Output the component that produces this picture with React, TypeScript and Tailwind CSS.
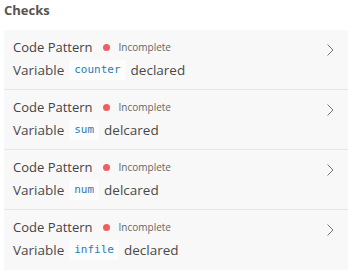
import React from "react";

const rows = [
  { code: "counter", word: "declared" },
  { code: "sum", word: "delcared" },
  { code: "num", word: "delcared" },
  { code: "infile", word: "declared" },
];

export default function App() {
  return (
    <div className="w-[348px] h-[279px] bg-white overflow-hidden" style={{ fontFamily: '"Open Sans", sans-serif' }}>
      <div className="pl-[4px] pt-[1px] h-[30px] text-[13px] leading-[18px] font-bold text-[#555]">Checks</div>
      <div className="ml-[4px] bg-[#f8f8f8]">
        {rows.map((r, i) => (
          <div
            key={i}
            className={`relative h-[60px] pl-[9px] pt-[7px] ${i < rows.length - 1 ? "border-b border-[#e6e6e6]" : ""}`}
          >
            <div className="flex items-center h-[20px] leading-[20px]">
              <span className="text-[13px] font-medium text-[#444]">Code Pattern</span>
              <span className="ml-[10px] w-[7px] h-[7px] rounded-full bg-[#ef5f5f]" />
              <span className="ml-[9px] text-[10px] text-[#666]">Incomplete</span>
            </div>
            <div className="flex items-center h-[22px] mt-[2px] text-[13.5px] leading-[22px] text-[#4a4a4a]">
              <span>Variable</span>
              <span
                className="ml-[5px] px-[5px] h-[20px] leading-[20px] bg-[#fdfdfd] rounded-[2px] text-[11px] text-[#2b7bb9]"
                style={{ fontFamily: '"DejaVu Sans Mono", monospace' }}
              >
                {r.code}
              </span>
              <span className="ml-[5px]">{r.word}</span>
            </div>
            <svg
              className="absolute right-[14px] top-[13px]"
              width="8"
              height="14"
              viewBox="0 0 8 14"
              fill="none"
            >
              <polyline points="1.5,1.5 7,7 1.5,12.5" stroke="#777" strokeWidth="1" />
            </svg>
          </div>
        ))}
      </div>
    </div>
  );
}
